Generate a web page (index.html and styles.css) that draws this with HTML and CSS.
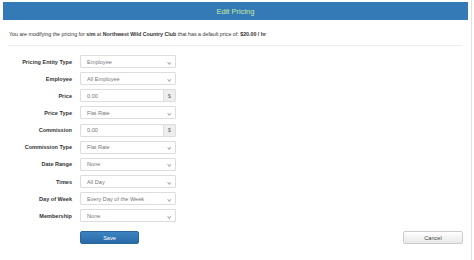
FILE: index.html
```html
<!DOCTYPE html>
<html lang="en">
<head>
    <meta charset="UTF-8">
    <meta name="viewport" content="width=device-width, initial-scale=1.0">
    <title>Edit Pricing</title>
    <link rel="stylesheet" href="styles.css">
</head>
<body>
    <div class="page">
        <div class="header">Edit Pricing</div>

        <p class="intro">
            You are modifying the pricing for <b>sim</b> at <b>Northwest Wild Country Club</b> that has a default price of: <b>$20.00 / hr</b>
        </p>
        <div class="divider"></div>

        <div class="form">
            <div class="row">
                <label>Pricing Entity Type</label>
                <div class="select">Employee<span class="caret"></span></div>
            </div>
            <div class="row">
                <label>Employee</label>
                <div class="select">All Employee<span class="caret"></span></div>
            </div>
            <div class="row">
                <label>Price</label>
                <div class="input-group"><span class="value">0.00</span><span class="addon">$</span></div>
            </div>
            <div class="row">
                <label>Price Type</label>
                <div class="select">Flat Rate<span class="caret"></span></div>
            </div>
            <div class="row">
                <label>Commission</label>
                <div class="input-group"><span class="value">0.00</span><span class="addon">$</span></div>
            </div>
            <div class="row">
                <label>Commission Type</label>
                <div class="select">Flat Rate<span class="caret"></span></div>
            </div>
            <div class="row">
                <label>Date Range</label>
                <div class="select">None<span class="caret"></span></div>
            </div>
            <div class="row">
                <label>Times</label>
                <div class="select">All Day<span class="caret"></span></div>
            </div>
            <div class="row">
                <label>Day of Week</label>
                <div class="select">Every Day of the Week<span class="caret"></span></div>
            </div>
            <div class="row">
                <label>Membership</label>
                <div class="select">None<span class="caret"></span></div>
            </div>
        </div>

        <div class="actions">
            <button class="btn btn-save">Save</button>
            <button class="btn btn-cancel">Cancel</button>
        </div>
    </div>
</body>
</html>
```

FILE: styles.css
```css
body {
    margin: 0;
    font-family: "Liberation Sans", Arial, sans-serif;
    background: #fff;
    color: #333;
}
.page {
    width: 471px;
    height: 260px;
    border-right: 1px solid #e2e2e2;
    overflow: hidden;
}
.header {
    margin: 2px 3px 0 3px;
    height: 18px;
    background-color: #337ab7;
    color: #c9eb9c;
    font-size: 7.5px;
    display: flex;
    align-items: center;
    justify-content: center;
}
.intro {
    margin: 10px 0 0 0;
    padding: 0 9px;
    font-size: 5.3px;
    line-height: 8px;
    color: #333;
}
.divider {
    margin: 7px 9px 0 8px;
    border-top: 1px solid #eee;
}
.form {
    margin-top: 9px;
}
.row {
    display: grid;
    grid-template-columns: 72px 96px;
    column-gap: 8px;
    align-items: center;
    height: 13px;
    margin-bottom: 4.17px;
}
.row label {
    text-align: right;
    font-size: 5.55px;
    font-weight: bold;
    color: #333;
}
.select,
.input-group {
    box-sizing: border-box;
    height: 13px;
    border: 1px solid #ddd;
    border-radius: 1px;
    font-size: 5.6px;
    color: #777;
    display: flex;
    align-items: center;
    position: relative;
}
.select {
    padding-left: 6px;
}
.caret {
    position: absolute;
    right: 4.5px;
    top: 4.5px;
    width: 1.6px;
    height: 1.6px;
    border-right: 0.5px solid #aaa;
    border-bottom: 0.5px solid #aaa;
    transform: rotate(45deg);
}
.input-group .value {
    flex: 1;
    padding-left: 6px;
}
.input-group .addon {
    width: 11px;
    height: 100%;
    background: #eee;
    border-left: 1px solid #ddd;
    display: flex;
    align-items: center;
    justify-content: center;
    color: #666;
    font-size: 5px;
}
.actions {
    display: flex;
    justify-content: space-between;
    margin: 8.8px 8px 0 80px;
}
.btn {
    width: 59px;
    height: 13px;
    border-radius: 2px;
    font-family: "Liberation Sans", Arial, sans-serif;
    font-size: 5.6px;
    padding: 0;
    cursor: pointer;
}
.btn-save {
    color: #fff;
    background: linear-gradient(#3b83c2, #2a6aa6);
    border: 1px solid #2b669a;
}
.btn-cancel {
    width: 60px;
    color: #444;
    background: linear-gradient(#fff, #e8e8e8);
    border: 1px solid #ccc;
}
```
